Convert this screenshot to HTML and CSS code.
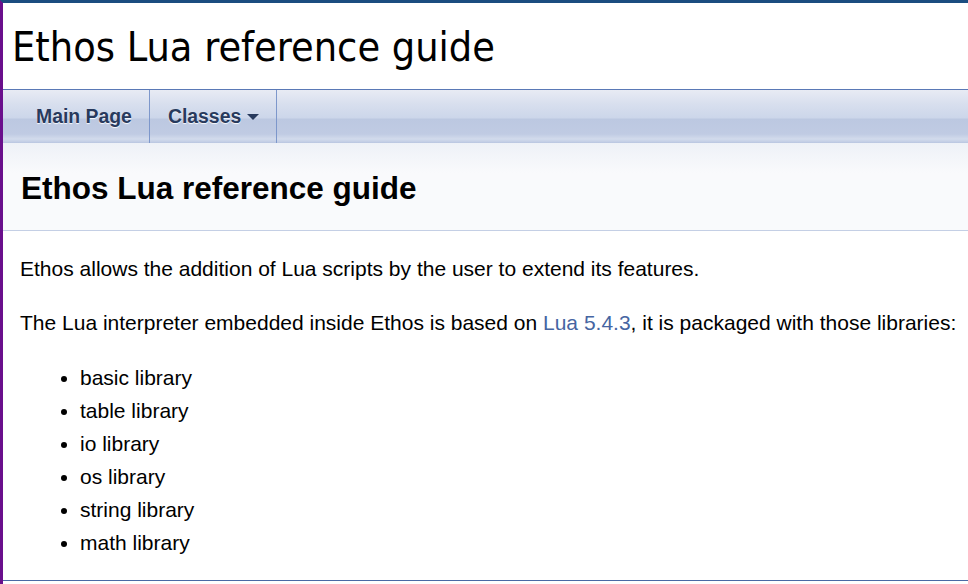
FILE: index.html
```html
<!DOCTYPE html>
<html>
<head>
<meta charset="utf-8">
<link rel="stylesheet" href="styles.css">
</head>
<body>
<div class="page">
  <div class="project">Ethos Lua reference guide</div>
  <nav class="nav">
    <a class="tab" href="#">Main Page</a>
    <a class="tab has-sub" href="#">Classes <span class="caret"></span></a>
  </nav>
  <div class="header">
    <div class="title">Ethos Lua reference guide</div>
  </div>
  <div class="contents">
    <p>Ethos allows the addition of Lua scripts by the user to extend its features.</p>
    <p class="nowrap">The Lua interpreter embedded inside Ethos is based on <a class="link" href="#">Lua 5.4.3</a>, it is packaged with those libraries:</p>
    <ul class="libs">
      <li>basic library</li>
      <li>table library</li>
      <li>io library</li>
      <li>os library</li>
      <li>string library</li>
      <li>math library</li>
    </ul>
  </div>
  <div class="footer-line"></div>
</div>
</body>
</html>
```

FILE: styles.css
```css
html, body {
  margin: 0;
  padding: 0;
  background: #ffffff;
}

.page {
  box-sizing: border-box;
  height: 584px;
  overflow: hidden;
  border-top: 3px solid #1b4d80;
  border-left: 3px solid #6a0f8c;
  font-family: "Liberation Sans", Arial, sans-serif;
  color: #000;
}

.project {
  height: 86px;
  box-sizing: border-box;
  padding-left: 9px;
  padding-top: 20px;
  font-family: "DejaVu Sans", sans-serif;
  font-stretch: condensed;
  font-size: 41px;
  line-height: 48px;
  color: #000;
}

.nav {
  display: flex;
  height: 54px;
  box-sizing: border-box;
  padding-left: 15px;
  border-top: 1px solid #5a79b6;
  background: linear-gradient(to bottom,
    #e8ebf4 0px, #d8dfee 14px, #ccd6ea 28px,
    #bcc8e1 29px, #c0cbe3 44px, #d2dbec 49px, #c2cde5 52px, #b7c4df 53px);
}

.tab {
  display: flex;
  align-items: center;
  padding: 0 17px 0 18px;
  height: 53px;
  font-family: "Liberation Sans", Arial, sans-serif;
  font-size: 19.4px;
  font-weight: bold;
  color: #283a5d;
  text-decoration: none;
  text-shadow: 0 1px 1px rgba(255, 255, 255, 0.9);
  border-right: 1px solid #7d97cb;
}

.has-sub {
  padding-left: 18px;
  padding-right: 17px;
}

.caret {
  display: inline-block;
  width: 0;
  height: 0;
  margin-left: 6px;
  margin-top: 1px;
  border-left: 6px solid transparent;
  border-right: 6px solid transparent;
  border-top: 6px solid #283a5d;
}

.header {
  height: 88px;
  box-sizing: border-box;
  background: linear-gradient(to bottom, #eef1f7 0px, #f9fafc 30px, #f9fafc 100%);
  border-bottom: 1px solid #c4cfe5;
  padding: 24px 0 0 18px;
}

.title {
  font-family: "Liberation Sans", Arial, sans-serif;
  font-weight: bold;
  font-size: 31.5px;
  line-height: 42px;
}

.contents {
  padding: 0 0 0 17px;
  font-size: 21px;
  line-height: 33px;
}

.contents p {
  margin: 21px 0 0;
}

.nowrap {
  white-space: nowrap;
}

.link {
  color: #4665a2;
  text-decoration: none;
}

.libs {
  margin: 22px 0 0;
  padding-left: 60px;
}

.libs li {
  line-height: 33px;
}

.footer-line {
  margin-top: 21px;
  border-top: 1px solid #4a6aa5;
}
```
